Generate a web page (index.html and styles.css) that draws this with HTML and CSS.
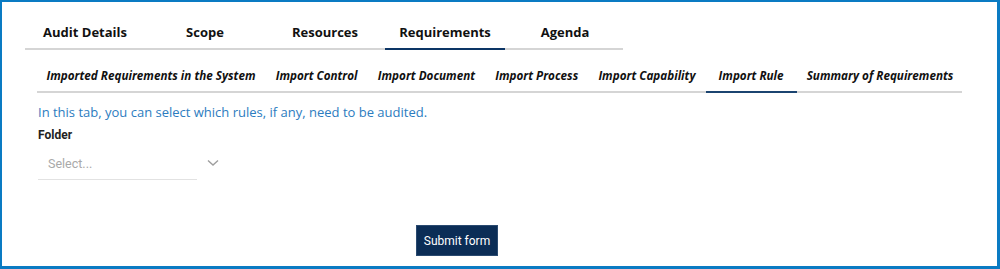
FILE: index.html
```html
<!DOCTYPE html>
<html>
<head>
<meta charset="utf-8">
<link rel="stylesheet" href="styles.css">
</head>
<body>
<div class="frame">
  <div class="tabs">
    <div class="tab">Audit Details</div>
    <div class="tab">Scope</div>
    <div class="tab">Resources</div>
    <div class="tab active">Requirements</div>
    <div class="tab">Agenda</div>
  </div>
  <div class="content">
    <div class="subtabs">
      <div class="subtab">Imported Requirements in the System</div>
      <div class="subtab">Import Control</div>
      <div class="subtab">Import Document</div>
      <div class="subtab">Import Process</div>
      <div class="subtab">Import Capability</div>
      <div class="subtab active">Import Rule</div>
      <div class="subtab">Summary of Requirements</div>
    </div>
    <p class="desc">In this tab, you can select which rules, if any, need to be audited.</p>
    <label class="label">Folder</label>
    <div class="select">
      <div class="select-field">Select...</div>
      <svg class="chevron" width="12" height="8" viewBox="0 0 12 8"><path d="M1 1.5 L6 6 L11 1.5" fill="none" stroke="#9e9e9e" stroke-width="1.4"/></svg>
    </div>
    <div class="actions">
      <button class="btn">Submit form</button>
    </div>
  </div>
</div>
</body>
</html>
```

FILE: styles.css
```css
* { box-sizing: border-box; }
html, body { margin: 0; padding: 0; background: #fff; }
.frame {
  width: 1000px;
  height: 269px;
  border-style: solid;
  border-color: #0a7bc3;
  border-width: 2px 3px 3px 2px;
  background: #fff;
  overflow: hidden;
}
.tabs {
  display: flex;
  margin: 15px 0 0 23px;
  width: 598px;
  border-bottom: 2px solid #d5d5d5;
}
.tab {
  width: 120px;
  flex: none;
  height: 31px;
  line-height: 31px;
  text-align: center;
  font-family: "Open Sans", sans-serif;
  font-weight: 700;
  font-size: 13px;
  color: #111;
}
.tab.active {
  border-bottom: 2px solid #0c3565;
  margin-bottom: -2px;
  height: 33px;
}
.content {
  padding-left: 35px;
}
.subtabs {
  display: flex;
  margin-top: 10px;
  width: 925px;
  border-bottom: 2px solid #d5d5d5;
}
.subtab {
  padding: 0 10.1px;
  height: 31px;
  line-height: 31px;
  font-family: "Open Sans", sans-serif;
  font-weight: 700;
  font-style: italic;
  font-size: 11.7px;
  color: #111;
  white-space: nowrap;
}
.subtab:first-child { padding-left: 9.5px; }
.subtab.active {
  padding: 0 13px;
  border-bottom: 2px solid #1b4470;
  margin-bottom: -2px;
  height: 33px;
}
.desc {
  margin: 9px 0 0 1px;
  font-family: "Open Sans", sans-serif;
  font-size: 13px;
  line-height: 20px;
  color: #2c7cc0;
}
.label {
  display: block;
  margin: 5px 0 0 1px;
  font-family: Roboto, sans-serif;
  font-weight: 700;
  font-size: 12px;
  line-height: 16px;
  color: #222;
}
.select {
  display: flex;
  align-items: center;
  margin: 5px 0 0 1px;
  height: 32px;
}
.select-field {
  width: 159px;
  height: 32px;
  line-height: 32px;
  padding-left: 10px;
  border-bottom: 1px solid #e2e2e2;
  font-family: Roboto, sans-serif;
  font-size: 12.5px;
  color: #a9a9a9;
}
.chevron {
  margin-left: 10px;
  margin-top: -2px;
}
.actions {
  margin-top: 45px;
  padding-left: 379px;
}
.btn {
  width: 82px;
  height: 31px;
  background: #0b2d56;
  border: 1px solid #2a4a70;
  color: #fff;
  font-family: Roboto, sans-serif;
  font-size: 12px;
  padding: 0;
  cursor: pointer;
}
```
